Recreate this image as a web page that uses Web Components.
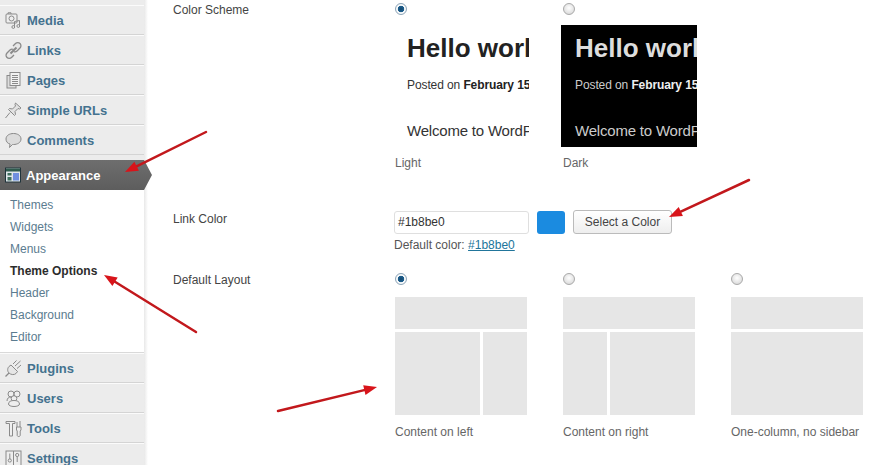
<!DOCTYPE html>
<html>
<head>
<meta charset="utf-8">
<title>Theme Options</title>
<style>
  html, body { margin: 0; height: 465px; overflow: hidden; background: #fff; }
  body { font-family: "Liberation Sans", Arial, sans-serif; }
</style>
</head>
<body>
<wp-admin-page>
  <wp-sidebar slot="sidebar">
    <wp-menu-item icon="media">Media</wp-menu-item>
    <wp-menu-item icon="links">Links</wp-menu-item>
    <wp-menu-item icon="pages">Pages</wp-menu-item>
    <wp-menu-item icon="pin">Simple URLs</wp-menu-item>
    <wp-menu-item icon="comments">Comments</wp-menu-item>
    <wp-menu-item icon="appearance" current>Appearance</wp-menu-item>
    <wp-submenu>
      <a>Themes</a>
      <a>Widgets</a>
      <a>Menus</a>
      <a class="on">Theme Options</a>
      <a>Header</a>
      <a>Background</a>
      <a>Editor</a>
    </wp-submenu>
    <wp-menu-item icon="plugins">Plugins</wp-menu-item>
    <wp-menu-item icon="users">Users</wp-menu-item>
    <wp-menu-item icon="tools">Tools</wp-menu-item>
    <wp-menu-item icon="settings">Settings</wp-menu-item>
  </wp-sidebar>

  <option-row label="Color Scheme" style="height:201px">
    <radio-option checked caption="Light"><theme-thumb></theme-thumb></radio-option>
    <radio-option caption="Dark"><theme-thumb dark></theme-thumb></radio-option>
  </option-row>
  <option-row label="Link Color" style="height:69px;padding-top:8px;box-sizing:border-box">
    <color-picker value="#1b8be0"></color-picker>
  </option-row>
  <option-row label="Default Layout">
    <radio-option checked caption="Content on left"><layout-thumb kind="left"></layout-thumb></radio-option>
    <radio-option caption="Content on right"><layout-thumb kind="right"></layout-thumb></radio-option>
    <radio-option caption="One-column, no sidebar"><layout-thumb kind="none"></layout-thumb></radio-option>
  </option-row>

  <red-arrows slot="overlay"></red-arrows>
</wp-admin-page>

<script>
const ICONS = {
  media: '<rect x="2" y="3" width="11" height="9" rx="1" fill="#eee"/><path d="M4 3V1.800h3V3"/><circle cx="7.500" cy="7.500" r="2.500"/><path d="M10.500 16V10.500l5-1V15"/><circle cx="9.300" cy="16" r="1.400" fill="#eee"/><circle cx="14.300" cy="15" r="1.400" fill="#eee"/>',
  links: '<g stroke-width="1.300" fill="#e6e6e6"><path d="M9 5l2.500-2.500a3 3 0 0 1 4.500 4.500l-3 3a3 3 0 0 1-3.500 .5"/><path d="M9.500 8.500a3 3 0 0 0-3.500 .5l-3 3a3 3 0 0 0 4.500 4.500l2.500-2.500"/></g><path d="M6.500 12.500l6-6" stroke-width="2"/>',
  pages: '<rect x="3" y="4.500" width="9" height="12.500" fill="#ddd"/><rect x="6" y="1.500" width="10" height="13" fill="#f2f2f2"/><path d="M8 4.500h6M8 6.500h6M8 8.500h6M8 10.500h6M8 12.500h6"/>',
  pin: '<path d="M11.500 2l5.500 5-1.500 1-1.500-.5-3 3 .5 3-1 1-6-6 1-1 3 .5 3-3-.5-1.500z" fill="#e2e2e2"/><path d="M6 11.500L1.500 17"/>',
  comments: '<path d="M9.500 2.500c4 0 7.500 2 7.500 5.500s-3.500 5.500-7.500 5.500h-1l-3 3 .5-3.500C3.500 12.500 2 10.500 2 8c0-3.500 3.500-5.500 7.500-5.500z" fill="#dcdcdc"/>',
  appearance: '<rect x="1.500" y="2" width="15" height="14" fill="#dfe6ea" stroke="#20343c"/><rect x="2" y="2.500" width="14" height="3" fill="#2f5b4d" stroke="none"/><rect x="3.500" y="7" width="4" height="2.500" fill="#3f6f5e" stroke="none"/><rect x="3.500" y="11" width="4" height="3.500" fill="#3f6f5e" stroke="none"/><rect x="9" y="7" width="6" height="7.500" fill="#6f8fe0" stroke="none"/>',
  plugins: '<path d="M1.500 17.500l3.500-3.500" stroke-width="1.300"/><path d="M5 14c-2-2-1.500-5 0-6.500l2-1.500 6.500 6.500-1.500 2c-1.500 1.500-5 1.500-7-.5z" fill="#e6e6e6"/><path d="M9 5l3.500-3.500M13 9.500l4-3.500M11 7l5.500-5"/>',
  users: '<circle cx="7" cy="5" r="3" fill="#eee"/><circle cx="13" cy="5" r="3" fill="#eee"/><path d="M3 12c0-3 2-4 4-4s3 1 3 2"/><circle cx="10" cy="9.500" r="2.800" fill="#eee"/><path d="M4.500 15c0-2.500 2.500-3.500 5.500-3.500s5.500 1 5.500 3.500c0 1.500-2.500 2.500-5.500 2.500s-5.500-1-5.500-2.500z" fill="#eee"/>',
  tools: '<path d="M2 2.500h9v2H8.500V17h-3V4.500H2z" fill="#eee"/><path d="M13 3v5M16 2v6M12.500 8h4.500v3l-.8 1v4.500a1.600 1.600 0 0 1-3 0V12l-.7-1z" fill="#eee"/>',
  settings: '<rect x="2" y="2" width="15" height="15" fill="#eee"/><path d="M9.500 2v15"/><circle cx="5.800" cy="11.500" r="1.600"/><path d="M5.800 4.500v5.500"/><circle cx="13.200" cy="6" r="1.600"/><path d="M13.200 8v5"/>'
};

class WpAdminPage extends HTMLElement {
  constructor() {
    super();
    this.attachShadow({ mode: 'open' }).innerHTML = `
      <style>
        :host { display: flex; position: relative; width: 884px; height: 465px; overflow: hidden; background: #fff; }
        .main { flex: 1; padding: 0 0 0 29px; min-width: 0; font-size: 12px; color: #555;
                background: linear-gradient(to right, #e8e8e8 0, #fff 4px) no-repeat; }
      </style>
      <slot name="sidebar"></slot>
      <div class="main"><slot></slot></div>
      <slot name="overlay"></slot>`;
  }
}

class WpSidebar extends HTMLElement {
  constructor() {
    super();
    this.attachShadow({ mode: 'open' }).innerHTML = `
      <style>
        :host { display: block; flex: 0 0 144px; width: 144px; height: 465px; box-sizing: border-box;
                padding-top: 5px; background: #ececec; position: relative; }
      </style>
      <slot></slot>`;
  }
}

class WpMenuItem extends HTMLElement {
  constructor() {
    super();
    const current = this.hasAttribute('current');
    this.attachShadow({ mode: 'open' }).innerHTML = `
      <style>
        :host { display: flex; align-items: center; box-sizing: border-box; height: 30px; padding-left: 4px; gap: 4px;
                position: relative; font: bold 13px "Liberation Sans", Arial, sans-serif; color: #44728f;
                border-top: 1px solid #fbfbfb; border-bottom: 1px solid #d4d4d4; background: #ececec; }
        :host([current]) { color: #fff; background: linear-gradient(#6e6e6e, #5d5d5d); border: 0; margin-top: 5px;
                font-size: 13px; width: 144px; gap: 3px; }
        :host([current])::after { content: ""; position: absolute; left: 144px; top: 0; width: 8px; height: 30px;
                background: linear-gradient(#6e6e6e, #5d5d5d); clip-path: polygon(0 0, 0 100%, 100% 50%); z-index: 2; }
        svg { width: 19px; height: 19px; flex: none; fill: none; stroke: ${current ? '#20343c' : '#8a8a8a'}; stroke-width: 1; }
      </style>
      <svg viewBox="0 0 19 19">${ICONS[this.getAttribute('icon')] || ''}</svg>
      <slot></slot>`;
  }
}

class WpSubmenu extends HTMLElement {
  constructor() {
    super();
    this.attachShadow({ mode: 'open' }).innerHTML = `
      <style>
        :host { display: block; box-sizing: border-box; height: 163px; padding: 4px 0 0 10px; background: #fff;
                border-bottom: 1px solid #d9d9d9; font: 12px/22px "Liberation Sans", Arial, sans-serif; color: #5b7c90; }
        ::slotted(a) { display: block; height: 22px; }
        ::slotted(a.on) { color: #2c2c2c; font-weight: bold; }
      </style>
      <slot></slot>`;
  }
}

class OptionRow extends HTMLElement {
  constructor() {
    super();
    this.attachShadow({ mode: 'open' }).innerHTML = `
      <style>
        :host { display: grid; grid-template-columns: 222px 1fr; align-items: start; }
        .label { color: #444; line-height: 18px; padding-top: 1px; }
        .body { display: flex; }
      </style>
      <div class="label">${this.getAttribute('label')}</div>
      <div class="body"><slot></slot></div>`;
  }
}

class RadioOption extends HTMLElement {
  constructor() {
    super();
    this.attachShadow({ mode: 'open' }).innerHTML = `
      <style>
        :host { display: block; flex: 0 0 168px; width: 168px; white-space: nowrap; }
        .radio { display: block; box-sizing: border-box; width: 12px; height: 12px; margin: 3px 0 10px 0; border-radius: 50%;
                 border: 1px solid #a9a9a9; background: radial-gradient(circle at 50% 40%, #fff, #d2d2d2); }
        :host([checked]) .radio { border-color: #8da5b8;
                 background: radial-gradient(circle, #12476f 0, #1d5f8e 3px, #fff 3.600px, #dde6ec 100%); }
        .cap { margin-top: 8px; line-height: 16px; color: #666; }
      </style>
      <span class="radio"></span>
      <slot></slot>
      <div class="cap">${this.getAttribute('caption')}</div>`;
  }
}

class ThemeThumb extends HTMLElement {
  constructor() {
    super();
    this.attachShadow({ mode: 'open' }).innerHTML = `
      <style>
        :host { display: block; width: 136px; height: 122px; margin-left: -2px; overflow: hidden; box-sizing: border-box;
                padding-left: 14px; background: #fff; color: #333; white-space: nowrap;
                font-family: "Liberation Sans", Arial, sans-serif; }
        :host([dark]) { background: #000; color: #ccc; }
        .h { font: bold 26px/30px "Liberation Sans", Arial, sans-serif; margin-top: 8px; color: #222; }
        :host([dark]) .h { color: #ddd; }
        .p { font-size: 12px; line-height: 16px; margin-top: 14px; letter-spacing: -.1px; }
        .p b { font-weight: bold; color: #222; }
        :host([dark]) .p b { color: #eee; }
        .w { font-size: 15px; line-height: 18px; margin-top: 29px; letter-spacing: -.2px; }
      </style>
      <div class="h">Hello world</div>
      <div class="p">Posted on <b>February 15</b></div>
      <div class="w">Welcome to WordPress</div>`;
  }
}

class LayoutThumb extends HTMLElement {
  constructor() {
    super();
    const cols = { left: '85px 44px', right: '44px 85px', none: '1fr' }[this.getAttribute('kind')];
    const cells = this.getAttribute('kind') === 'none' ? '<i></i>' : '<i></i><i></i>';
    this.attachShadow({ mode: 'open' }).innerHTML = `
      <style>
        :host { display: block; width: 132px; padding: 2px 0 1px; }
        .top { height: 32px; background: #e6e6e6; margin-bottom: 3px; }
        .low { display: grid; grid-template-columns: ${cols}; column-gap: 3px; height: 83px; }
        i { display: block; background: #e6e6e6; }
      </style>
      <div class="top"></div>
      <div class="low">${cells}</div>`;
  }
}

class ColorPicker extends HTMLElement {
  constructor() {
    super();
    const value = this.getAttribute('value');
    this.attachShadow({ mode: 'open' }).innerHTML = `
      <style>
        :host { display: block; margin-top: 1px; font-size: 12px; color: #555; }
        .line { display: flex; align-items: center; gap: 8px; }
        .field { box-sizing: border-box; width: 135px; height: 23px; margin-left: -1px; border: 1px solid #dfdfdf; border-radius: 3px;
                 padding-left: 3px; line-height: 21px; color: #333; background: #fff; }
        .swatch { width: 28px; height: 23px; border-radius: 3px; background: #1b8be0; }
        .btn { box-sizing: border-box; width: 99px; height: 24px; line-height: 22px; text-align: center; color: #444;
               border: 1px solid #bbb; border-radius: 3px; background: linear-gradient(#fff, #eee); }
        .def { margin: 3px 0 0 -1px; line-height: 16px; }
        .def a { color: #21759b; text-decoration: underline; }
      </style>
      <div class="line">
        <div class="field">${value}</div>
        <div class="swatch"></div>
        <div class="btn">Select a Color</div>
      </div>
      <div class="def">Default color: <a>${value}</a></div>`;
  }
}

class RedArrows extends HTMLElement {
  constructor() {
    super();
    const arrow = (x1, y1, x2, y2) => {
      const a = Math.atan2(y2 - y1, x2 - x1);
      const pt = (d, o) => `${(x2 - d * Math.cos(a) - o * Math.sin(a)).toFixed(1)},${(y2 - d * Math.sin(a) + o * Math.cos(a)).toFixed(1)}`;
      return `<line x1="${x1}" y1="${y1}" x2="${pt(10, 0).split(',')[0]}" y2="${pt(10, 0).split(',')[1]}"/>
              <polygon points="${x2},${y2} ${pt(13, 5)} ${pt(13, -5)}"/>`;
    };
    this.attachShadow({ mode: 'open' }).innerHTML = `
      <style>
        :host { display: block; position: absolute; left: 0; top: 0; width: 884px; height: 465px; pointer-events: none; z-index: 5; }
        svg { display: block; }
        line { stroke: #c2181c; stroke-width: 2.500; stroke-linecap: round; }
        polygon { fill: #d8141a; }
      </style>
      <svg width="884" height="465">
        ${arrow(206, 132, 125, 172)}
        ${arrow(196, 332, 104, 275)}
        ${arrow(749, 180, 669, 217)}
        ${arrow(278, 411, 377, 387)}
      </svg>`;
  }
}

customElements.define('wp-admin-page', WpAdminPage);
customElements.define('wp-sidebar', WpSidebar);
customElements.define('wp-menu-item', WpMenuItem);
customElements.define('wp-submenu', WpSubmenu);
customElements.define('option-row', OptionRow);
customElements.define('radio-option', RadioOption);
customElements.define('theme-thumb', ThemeThumb);
customElements.define('layout-thumb', LayoutThumb);
customElements.define('color-picker', ColorPicker);
customElements.define('red-arrows', RedArrows);
</script>
</body>
</html>
